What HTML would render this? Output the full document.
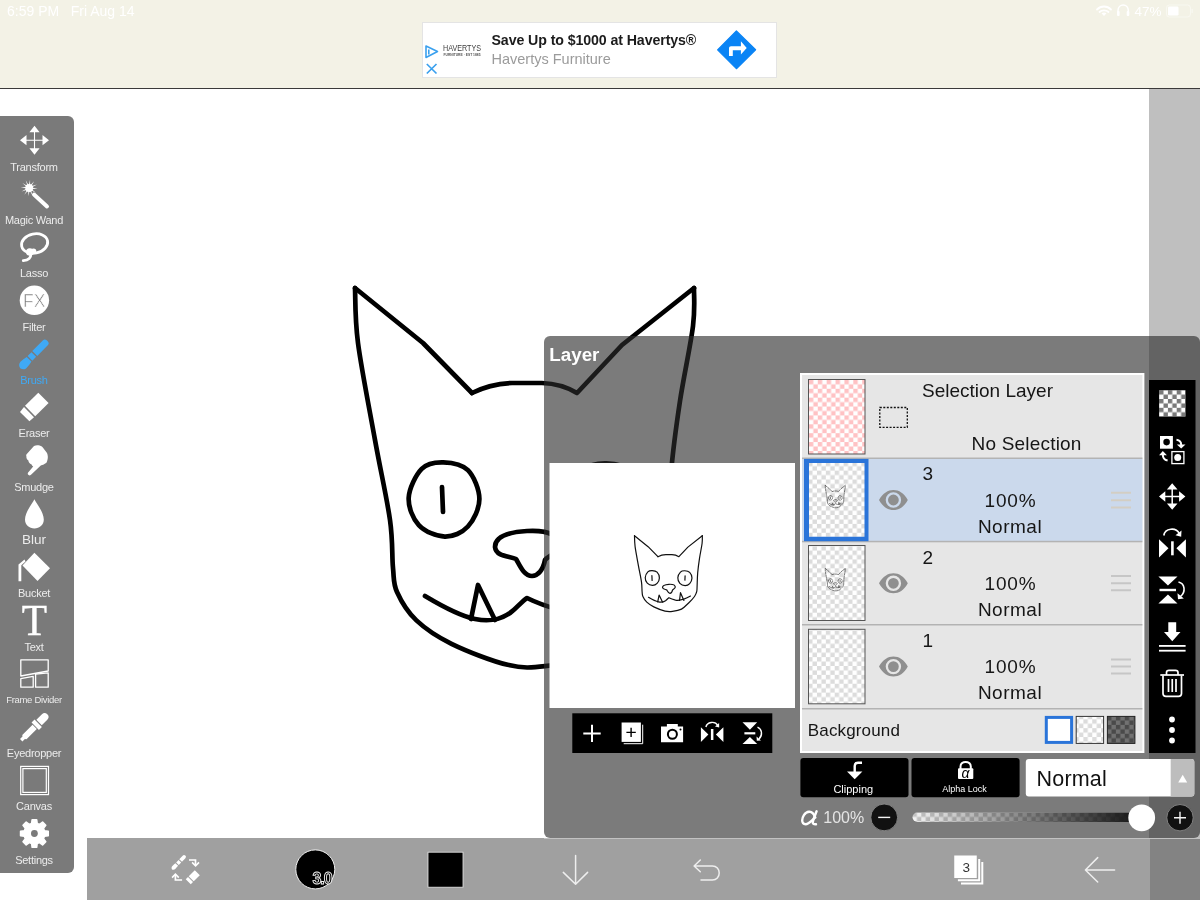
<!DOCTYPE html>
<html><head><meta charset="utf-8">
<style>
*{margin:0;padding:0;box-sizing:border-box}
html,body{width:1200px;height:900px;overflow:hidden;background:#fff;font-family:"Liberation Sans",sans-serif}
body{will-change:transform}
.a{position:absolute}
#top{left:0;top:0;width:1200px;height:88.8px;background:#f3f2e6;border-bottom:1.5px solid #3a3a3a}
.st{color:#fff;font-size:14px;top:3px}
#ad{left:422px;top:22px;width:355px;height:56px;background:#fff;border:1px solid #e4e4e4}
#col{left:1149px;top:89px;width:51px;height:811px;background:#bfbfbf}
#tb{left:0;top:116px;width:74px;height:757px;background:#7a7a7a;border-radius:0 6px 6px 0}
.lbl{position:absolute;left:0;width:68px;text-align:center;font-size:11px;color:#ececec;white-space:nowrap;letter-spacing:-0.25px}
.ic{position:absolute}
#bb{left:87px;top:838px;width:1063px;height:62px;background:#a0a0a0}
#bbc{left:1150px;top:839px;width:50px;height:61px;background:#838383}
#bbl{left:544.4px;top:838px;width:655.6px;height:1.2px;background:#c2c2c2}
#panel{left:544.4px;top:336px;width:655.6px;height:501.6px;background:rgba(44,44,44,0.625);border-radius:6px}
</style></head><body>
<div id="top" class="a"></div>
<div class="a st" style="left:7px">6:59 PM&nbsp;&nbsp;&nbsp;Fri Aug 14</div>
<svg class="a" style="left:1090px;top:0" width="110" height="24">
<g fill="none" stroke="#fff" stroke-width="1.8" stroke-linecap="round">
<path d="M7,9.5 C11,5.5 17,5.5 21,9.5"/>
<path d="M9.5,12 C12,9.8 16,9.8 18.5,12"/>
</g>
<path d="M14,16 L11.5,13.3 C13,12.3 15,12.3 16.5,13.3 Z" fill="#fff"/>
<g fill="none" stroke="#fff" stroke-width="1.5" stroke-linecap="round">
<path d="M28,14 V10.5 C28,7 30.5,5 33.2,5 C36,5 38.3,7 38.3,10.5 V14"/>
</g>
<rect x="27" y="11" width="2.6" height="5" rx="1" fill="#fff"/>
<rect x="36.7" y="11" width="2.6" height="5" rx="1" fill="#fff"/>
<text x="44.5" y="16" font-family="Liberation Sans" font-size="13.5" fill="#fff">47%</text>
<rect x="76.5" y="5" width="24" height="12" rx="3" fill="none" stroke="#fff" stroke-width="1" opacity="0.45"/>
<rect x="78" y="6.5" width="10.5" height="9" rx="1.2" fill="#fff"/>
<rect x="101.5" y="9" width="1.3" height="4" fill="#fff" opacity="0.45"/>
</svg>
<div id="ad" class="a"></div>
<svg class="a" style="left:0;top:0" width="1200" height="88">
<g fill="none" stroke="#3aa0ee" stroke-width="1.6" stroke-linejoin="round">
<path d="M426,46 L437.5,51.5 L426,57.5 Z"/>
<path d="M428.8,49.5 V54.5"/>
<path d="M426.8,64 L436.5,73.5 M436.5,64 L426.8,73.5" stroke-width="1.7"/>
</g>
<text x="443" y="51.3" font-family="Liberation Sans" font-size="8.3" fill="#3d3d3d" textLength="38" lengthAdjust="spacingAndGlyphs">HAVERTYS</text>
<text x="443.5" y="55.5" font-family="Liberation Sans" font-size="3" font-weight="700" fill="#555" textLength="37" lengthAdjust="spacingAndGlyphs">FURNITURE · EST 1885</text>
<path d="M736.4,31 L755.6,49.8 L736.4,68.7 L717.6,49.8 Z" fill="#0a84f5" stroke="#0a84f5" stroke-width="1.2" stroke-linejoin="round"/>
<path d="M729,56 V48.3 C729,47 729.8,46.3 731,46.3 H740.9 V41.3 L746.7,48 L740.9,54.6 V50.2 H732.8 V56 Z" fill="#fff"/>
</svg>
<div class="a" style="left:491.5px;top:31.8px;font-size:14.2px;font-weight:700;color:#1c1c1c;white-space:nowrap;letter-spacing:-0.1px">Save Up to $1000 at Havertys®</div>
<div class="a" style="left:491.5px;top:50.5px;font-size:14.5px;color:#9b9b9b;white-space:nowrap">Havertys Furniture</div>

<div id="col" class="a"></div>
<div id="bb" class="a"></div>
<div id="bbc" class="a"></div><div id="bbl" class="a"></div>
<svg class="a" style="left:0;top:0" width="1200" height="900">
<g fill="#fff">
<!-- swap brush eraser -->
<g fill="#fff">
<g transform="translate(172,869.4) rotate(-46)">
<path d="M0,0 C0.3,-1.5 1.5,-2 3,-2 C4.5,-2 6,-2 6.8,-1.9 L6.8,1.9 C6,2 4.5,2 3,2 C1.5,2 0.3,1.5 0,0 Z"/>
<rect x="7.9" y="-1.8" width="3.4" height="3.6"/>
<path d="M12.4,-1.9 H17.3 A1.9,1.9 0 0 1 17.3,1.9 H12.4 Z"/>
</g>
<path d="M189,860 H195.5 V865" fill="none" stroke="#fff" stroke-width="1.7"/>
<path d="M192.1,862.4 L195.6,865.8 L199,862.4" fill="none" stroke="#fff" stroke-width="1.6"/>
<path d="M182.1,880 H175.4 V874.8" fill="none" stroke="#fff" stroke-width="1.7"/>
<path d="M172.1,877.6 L175.4,874.2 L178.8,877.6" fill="none" stroke="#fff" stroke-width="1.6"/>
<g transform="translate(194.8,870.2) rotate(135)">
<rect x="0" y="-7.07" width="8.6" height="7.07"/>
<rect x="9.6" y="-7.07" width="3.2" height="7.07"/>
</g>
</g>
</svg>
<svg class="a" style="left:0;top:0" width="1200" height="900">
<circle cx="315.3" cy="869.4" r="19.5" fill="#000" stroke="#f0f0f0" stroke-width="1"/>
<text x="322" y="883.7" text-anchor="middle" font-family="Liberation Sans" font-weight="700" font-size="16" fill="#000" stroke="#eee" stroke-width="0.9" letter-spacing="-1">3.0</text>
<rect x="428" y="852.2" width="35" height="35" fill="#000" stroke="#e8e8e8" stroke-width="0.8"/>
<g fill="none" stroke="#eeeeee" stroke-width="1.5" stroke-linecap="round" stroke-linejoin="round">
<path d="M575.6,855.6 V884 M563.3,872.4 L575.6,884.2 L587.6,872.4"/>
<path d="M700.3,860 L694.1,866 L700.3,871.8 M694.5,866 H712.5 C716.5,866 719.2,869 719.2,873 C719.2,877 716.5,880 712.5,880 H701"/>
<path d="M1085.4,870 H1114.6 M1097.7,857.6 L1085.4,870 L1097.7,882"/>
</g>
<g fill="#fff">
<path d="M978.2,859 H980.2 V881.3 H957.9 V879.3 H978.2 Z"/>
<path d="M981.3,862 H983.3 V884.5 H961 V882.5 H981.3 Z"/>
<rect x="954.25" y="855.5" width="22.5" height="22.5"/>
</g>
<text x="966.2" y="871.8" text-anchor="middle" font-family="Liberation Sans" font-size="13.5" fill="#333">3</text>
</svg>

<!-- big cat -->
<svg class="a" style="left:0;top:0" width="1200" height="900">
<defs>
<g id="cat" fill="none" stroke-linecap="round" stroke-linejoin="round">
<path d="M472,393 L423,343 L355,288"/>
<path d="M355.0,288.0 C355.5,297.2 354.7,317.7 358.0,343.0 C361.3,368.3 369.7,410.5 375.0,440.0 C380.3,469.5 387.0,498.7 390.0,520.0 C393.0,541.3 391.8,556.0 393.0,568.0 C394.2,580.0 393.1,583.3 397.0,592.0 C400.9,600.7 407.3,611.8 416.4,620.4 C425.5,629.0 436.3,636.4 451.5,643.8 C466.7,651.2 492.0,661.1 507.6,664.8 C523.2,668.5 531.3,667.8 545.0,666.2 C558.7,664.6 576.3,662.2 590.0,655.0 C603.7,647.8 616.2,633.5 627.0,623.0 C637.8,612.5 648.5,601.2 655.0,592.0 C661.5,582.8 663.8,576.7 666.0,568.0 C668.2,559.3 667.2,555.8 668.0,540.0 C668.8,524.2 669.0,496.2 671.0,473.0 C673.0,449.8 676.3,425.5 680.0,401.0 C683.7,376.5 690.7,344.8 693.0,326.0 C695.3,307.2 693.8,294.3 694.0,288.0"/>
<path d="M694,288 L622,345 L577,393 C567,387 557,383.5 542,383 L512,383 C497,383.5 484,387 472,393"/>
<path d="M443.3,462.3 C451.0,462.5 461.9,464.1 467.9,470.2 C473.9,476.3 479.4,489.7 479.4,499.1 C479.4,508.5 473.7,520.2 467.9,526.5 C462.1,532.8 453.0,536.8 444.8,536.6 C436.6,536.4 424.8,531.6 418.8,525.1 C412.8,518.6 408.2,507.1 408.7,497.7 C409.2,488.3 415.9,474.7 421.7,468.8 C427.5,462.9 435.6,462.1 443.3,462.3 Z"/>
<path d="M606.3,463.3 C614.0,463.5 624.9,465.1 630.9,471.2 C636.9,477.3 642.4,490.7 642.4,500.1 C642.4,509.5 636.7,521.2 630.9,527.5 C625.1,533.8 616.0,537.8 607.8,537.6 C599.6,537.4 587.8,532.6 581.8,526.1 C575.8,519.6 571.2,508.1 571.7,498.7 C572.2,489.3 578.9,475.7 584.7,469.8 C590.5,463.9 598.6,463.1 606.3,463.3 Z"/>
<path d="M442,487 L443,512 M608,489 L607,510"/>
<path d="M527,531 C545,530 558,533 559,545 C559,553 548,556 545,560 C543,570 538,576 532,576 C524,576 520,566 516,559 C510,556 496,557 495,547 C495,536 510,532 527,531 Z"/>
<path d="M425,596 C445,608 460,616 475,619 C490,622 500,620 510,613 C518,607 522,601 527,598 C535,602 545,606 560,610 C585,614 615,602 635,590"/>
<path d="M471,619 L478,585 L495,620 M580,612 L585,573 L602,612"/>
</g>
</defs>
<use href="#cat" stroke="#000" stroke-width="4.7"/>
</svg>


<div id="tb" class="a"></div>
<svg class="a" style="left:0;top:0" width="80" height="900">
<g fill="#fff" stroke="none">
<!-- transform -->
<path d="M34.5,125.8 L39.6,132.3 L29.4,132.3 Z M34.5,154.7 L39.6,148.2 L29.4,148.2 Z M20,140.2 L26.5,135.1 L26.5,145.3 Z M49,140.2 L42.5,135.1 L42.5,145.3 Z"/>
<path d="M34.5,131 V149.5 M25.5,140.2 H43.5" stroke="#fff" stroke-width="1.1"/>
<!-- magic wand -->
<g transform="translate(29.2,188)"><path d="M0.84,-8.36 L0.92,-2.43 L4.91,-6.82 L2.01,-1.65 L7.66,-3.45 L2.57,-0.42 L8.36,0.84 L2.43,0.92 L6.82,4.91 L1.65,2.01 L3.45,7.66 L0.42,2.57 L-0.84,8.36 L-0.92,2.43 L-4.91,6.82 L-2.01,1.65 L-7.66,3.45 L-2.57,0.42 L-8.36,-0.84 L-2.43,-0.92 L-6.82,-4.91 L-1.65,-2.01 L-3.45,-7.66 L-0.42,-2.57 Z"/><circle r="3.9"/></g>
<path d="M34,194.5 L47,206.5" stroke="#fff" stroke-width="4" stroke-linecap="round"/>
<!-- lasso -->
<g fill="none" stroke="#fff" stroke-width="2.8" stroke-linecap="round">
<ellipse cx="34.6" cy="243.5" rx="13.2" ry="9.6" transform="rotate(-12 34.6 243.5)"/>
<path d="M30.5,252.5 C32,258 28,260.3 23.3,260.6"/>
</g>
<circle cx="29.8" cy="252" r="3.8"/>
<circle cx="33.5" cy="251.3" r="2.8"/>
<!-- filter -->
<circle cx="34.4" cy="300.3" r="14.7"/>
</g>
<text x="34.2" y="306.5" text-anchor="middle" font-family="Liberation Sans" font-size="17.5" fill="#7a7a7a" stroke="#fff" stroke-width="0.55">FX</text>
<!-- brush -->
<g fill="#3fa9f5" transform="translate(20.2,368.2) rotate(-45.3)">
<path d="M0,0 C0.5,-2.5 2,-4.2 5,-4.3 C8,-4.3 10.5,-3.8 12.6,-3.3 V3.3 C10.5,3.8 8,4.3 5,4.3 C2.5,4.3 0.8,3 0,0 Z"/>
<rect x="13.9" y="-3.3" width="5.4" height="6.6"/>
<path d="M20.7,-3.5 H36 A2.5,3.5 0 0 1 36,3.5 H20.7 Z"/>
</g>
<!-- eraser -->
<g fill="#fff">
<path d="M38.3,392.7 L48.6,403 L35.2,416.2 L25,405.8 Z"/>
<path d="M24,407 L34,417.2 L29.4,421.3 L20,411.9 Z"/>
</g>
<!-- smudge -->
<path fill="#fff" d="M34,446 C36,445 38,445.2 39.6,445.6 C41.5,446.2 42.5,447 43.2,448 L47,453 C48,455 48,458 47.6,459.2 C47,462 46.5,463 45.6,463.2 C44,464.5 42.5,465 40.8,465.4 L31,474.8 C30,475.7 28.5,475.5 28,474.6 C27.5,473.6 27.8,472.6 28.6,472 L33.2,466.6 C32.5,466 31.8,465.3 31.6,464.4 C29.5,463.5 28.5,462 28.4,460.4 C27,459.5 26.2,458 26.4,456.4 C26,455.5 26.2,454.5 26.8,454 Z"/>
<!-- blur -->
<path d="M34.4,499.2 C36,503 43.8,512 43.8,519.5 C43.8,524.8 39.5,528.4 34.4,528.4 C29.3,528.4 25,524.8 25,519.5 C25,512 32.8,503 34.4,499.2 Z" fill="#fff"/>
<!-- bucket -->
<g fill="#fff">
<path d="M34.4,552.7 L50,568.3 L37.5,581 L22.5,565.5 Z"/>
<path d="M18.5,564.5 L24.5,559.5 L25.5,561.5 L21.3,565.2 L21.3,581.3 L18.5,581.3 Z"/>
</g>
<!-- text -->
<text transform="translate(34.3,634.8) scale(0.94,1)" text-anchor="middle" font-family="Liberation Serif" font-size="44" fill="#fff" stroke="#fff" stroke-width="0.4">T</text>
<!-- frame divider -->
<g fill="none" stroke="#fff" stroke-width="1.3" stroke-linejoin="round">
<path d="M20.8,659.8 H48.2 V671 L20.8,676 Z"/>
<path d="M20.8,678.6 L33.2,676.4 V687.2 H20.8 Z"/>
<path d="M35.6,674.2 L48.2,672.8 V687.2 H35.6 Z"/>
</g>
<!-- eyedropper -->
<g fill="#fff" transform="translate(21.2,740.2) rotate(-44.8)">
<path d="M0,-1.7 H3.5 L4.5,-3 H19 V3 H4.5 L3.5,1.7 H0 Z"/>
<rect x="19.8" y="-5.2" width="4.2" height="10.4"/>
<path d="M25.2,-3.8 H33 A3.8,3.8 0 0 1 33,3.8 H25.2 Z"/>
</g>
<!-- canvas -->
<g fill="none" stroke="#fff">
<rect x="20.7" y="766.4" width="27.8" height="28.2" stroke-width="1.2"/>
<rect x="22.9" y="768.6" width="23.4" height="23.8" stroke-width="1.2"/>
</g>
<!-- settings -->
<g transform="translate(34.4,833.5)"><path fill="#fff" stroke="#fff" stroke-width="1.6" stroke-linejoin="round" d="M-2.77,-10.02 L-2.23,-13.82 L2.23,-13.82 L2.77,-10.02 L5.13,-9.05 L8.20,-11.35 L11.35,-8.20 L9.05,-5.13 L10.02,-2.77 L13.82,-2.23 L13.82,2.23 L10.02,2.77 L9.05,5.13 L11.35,8.20 L8.20,11.35 L5.13,9.05 L2.77,10.02 L2.23,13.82 L-2.23,13.82 L-2.77,10.02 L-5.13,9.05 L-8.20,11.35 L-11.35,8.20 L-9.05,5.13 L-10.02,2.77 L-13.82,2.23 L-13.82,-2.23 L-10.02,-2.77 L-9.05,-5.13 L-11.35,-8.20 L-8.20,-11.35 L-5.13,-9.05 Z"/><circle r="3.4" fill="#7a7a7a"/></g>
</svg>
<div class="lbl a" style="top:161px;left:0">Transform</div>
<div class="lbl a" style="top:214px;left:0">Magic Wand</div>
<div class="lbl a" style="top:267px">Lasso</div>
<div class="lbl a" style="top:321px">Filter</div>
<div class="lbl a" style="top:374px;color:#3fa9f5">Brush</div>
<div class="lbl a" style="top:427px">Eraser</div>
<div class="lbl a" style="top:481px">Smudge</div>
<div class="lbl a" style="top:532px;font-size:13.5px;letter-spacing:0">Blur</div>
<div class="lbl a" style="top:587px">Bucket</div>
<div class="lbl a" style="top:641px">Text</div>
<div class="lbl a" style="top:694px;font-size:9.5px;letter-spacing:-0.3px">Frame Divider</div>
<div class="lbl a" style="top:747px">Eyedropper</div>
<div class="lbl a" style="top:800.3px">Canvas</div>
<div class="lbl a" style="top:854px">Settings</div>


<div id="panel" class="a"></div>
<svg class="a" style="left:0;top:0" width="1200" height="900">
<defs>
<pattern id="ckPink" x="808.9" y="379.9" width="8.88" height="8.88" patternUnits="userSpaceOnUse">
<rect width="8.88" height="8.88" fill="#fff"/><rect width="4.44" height="4.44" fill="#ffc2c4"/><rect x="4.44" y="4.44" width="4.44" height="4.44" fill="#ffc2c4"/>
</pattern>
<pattern id="ckGray" x="0" y="0" width="8.88" height="8.88" patternUnits="userSpaceOnUse">
<rect width="8.88" height="8.88" fill="#fff"/><rect width="4.44" height="4.44" fill="#dcdcdc"/><rect x="4.44" y="4.44" width="4.44" height="4.44" fill="#dcdcdc"/>
</pattern>
<pattern id="ckDark" x="1107" y="716" width="8.88" height="8.88" patternUnits="userSpaceOnUse">
<rect width="8.88" height="8.88" fill="#717171"/><rect width="4.44" height="4.44" fill="#4a4a4a"/><rect x="4.44" y="4.44" width="4.44" height="4.44" fill="#4a4a4a"/>
</pattern>
<pattern id="ckTool" x="1159.1" y="390.2" width="8.8" height="8.8" patternUnits="userSpaceOnUse">
<rect width="8.8" height="8.8" fill="#fff"/><rect width="4.4" height="4.4" fill="#7a7a7a"/><rect x="4.4" y="4.4" width="4.4" height="4.4" fill="#7a7a7a"/>
</pattern>
<pattern id="ckSl" x="912.5" y="812.5" width="8.8" height="8.8" patternUnits="userSpaceOnUse">
<rect width="8.8" height="8.8" fill="#f4f4f4"/><rect width="4.4" height="4.4" fill="#c4c4c4"/><rect x="4.4" y="4.4" width="4.4" height="4.4" fill="#c4c4c4"/>
</pattern>
<linearGradient id="sl" x1="0" x2="1" y1="0" y2="0">
<stop offset="0" stop-color="#111" stop-opacity="0"/>
<stop offset="1" stop-color="#111" stop-opacity="1"/>
</linearGradient>
</defs>
<text x="549.3" y="361" font-family="Liberation Sans" font-weight="700" font-size="18.8" fill="#fff">Layer</text>
<!-- preview -->
<rect x="549.5" y="463" width="245.5" height="245" fill="#fff"/>
<use href="#cat" stroke="#111" stroke-width="6" transform="translate(563.5,478.1) scale(0.2)"/>
<!-- preview toolbar -->
<rect x="572.3" y="713.3" width="200" height="39.7" fill="#000"/>
<g fill="#fff">
<path d="M583.3,733.4 H600.7 M592,724.7 V742.1" stroke="#fff" stroke-width="2"/>
<path d="M642.7,724.7 V743.7 H623.7" fill="none" stroke="#fff" stroke-width="1"/>
<rect x="621.6" y="722.5" width="19.3" height="19.4"/>
<path d="M626.4,732.4 H635.8 M631.1,727.7 V737.1" stroke="#000" stroke-width="1.4"/>
<path d="M661,726.6 H666.9 V724 H677.8 V726.6 H683.1 V742.2 H661 Z"/>
<circle cx="672.4" cy="734.25" r="4.5" fill="none" stroke="#000" stroke-width="2"/>
<circle cx="680.5" cy="729.5" r="1" fill="#000"/>
<path d="M700.9,727.2 L708.4,734.4 L700.9,741.9 Z M723.4,727.2 L715.9,734.4 L723.4,741.9 Z"/>
<rect x="710.9" y="729" width="2.5" height="11"/>
<path d="M705.9,727 C707,722 715,720.5 717.8,725.5" fill="none" stroke="#fff" stroke-width="1.4"/>
<path d="M719.1,723 L719.2,727.5 L715,726.5 Z"/>
<path d="M742.5,722.2 H757.2 L749.9,729.7 Z M742.5,744.1 H757.2 L749.9,736.9 Z"/>
<rect x="744.4" y="732.2" width="10.9" height="2.2"/>
<path d="M757.5,727.2 C762,729 763,735 759,739" fill="none" stroke="#fff" stroke-width="1.4"/>
<path d="M756.5,736.5 L756.8,740.8 L761,740.5 Z"/>
</g>
<!-- layer list -->
<rect x="801" y="374" width="342.4" height="378" fill="#e6e6e6" stroke="#fff" stroke-width="2"/>
<rect x="802" y="458.5" width="340.4" height="82.8" fill="#cbd9ec"/>
<g fill="#b3b3b3">
<rect x="802" y="457.5" width="340.4" height="1.5"/>
<rect x="802" y="540.8" width="340.4" height="1.5"/>
<rect x="802" y="624" width="340.4" height="1.5"/>
<rect x="802" y="708" width="340.4" height="1.5"/>
</g>
<!-- thumbs -->
<rect x="808.5" y="379.5" width="56.5" height="74.5" fill="url(#ckPink)" stroke="#555" stroke-width="1"/>
<rect x="806.5" y="461.4" width="59.5" height="77.3" fill="none" stroke="#2a74d9" stroke-width="5"/>
<rect x="809" y="463" width="55.5" height="73.7" fill="url(#ckGray)"/>
<rect x="808.5" y="545.5" width="56.5" height="75" fill="url(#ckGray)" stroke="#555" stroke-width="1"/>
<rect x="808.5" y="629.3" width="56.5" height="74.5" fill="url(#ckGray)" stroke="#555" stroke-width="1"/>
<use href="#cat" stroke="#3a3a3a" stroke-width="13" stroke-dasharray="40,18" opacity="0.85" transform="translate(804.3,468.4) scale(0.059)"/>
<use href="#cat" stroke="#3a3a3a" stroke-width="13" stroke-dasharray="40,18" opacity="0.85" transform="translate(804.3,551.5) scale(0.059)"/>
<rect x="879.8" y="407.5" width="27.5" height="19.8" fill="none" stroke="#111" stroke-width="1.3" stroke-dasharray="2,1.5"/>
<g font-family="Liberation Sans" font-size="19" fill="#161616">
<text x="922" y="397.2">Selection Layer</text>
<text x="971.5" y="449.7" letter-spacing="0.2">No Selection</text>
<text x="922.5" y="480">3</text>
<text x="1010.5" y="506.8" text-anchor="middle" letter-spacing="0.8">100%</text>
<text x="1010" y="532.5" text-anchor="middle" letter-spacing="0.5">Normal</text>
<text x="922.5" y="563.8">2</text>
<text x="1010.5" y="590.1" text-anchor="middle" letter-spacing="0.8">100%</text>
<text x="1010" y="615.8" text-anchor="middle" letter-spacing="0.5">Normal</text>
<text x="922.5" y="647">1</text>
<text x="1010.5" y="673.4" text-anchor="middle" letter-spacing="0.8">100%</text>
<text x="1010" y="699" text-anchor="middle" letter-spacing="0.5">Normal</text>
<text x="807.8" y="736" font-size="17" letter-spacing="0.15">Background</text>
</g>
<g id="eyes" fill="#8f8f8f" fill-rule="evenodd">
<path d="M879,500 C883,493 888,490 893.4,490 C899,490 904,493 907.8,500 C904,507 899,510 893.4,510 C888,510 883,507 879,500 Z M901.1,500 A7.7,7.7 0 1,0 885.7,500 A7.7,7.7 0 1,0 901.1,500 Z M898.8,500 A5.4,5.4 0 1,0 888,500 A5.4,5.4 0 1,0 898.8,500 Z"/>
</g>
<use href="#eyes" y="83.3"/>
<use href="#eyes" y="166.6"/>
<g stroke-width="2">
<path d="M1111,492.8 H1131 M1111,500.2 H1131 M1111,507.5 H1131" stroke="#d3cec3"/>
<path d="M1111,576.1 H1131 M1111,583.3 H1131 M1111,590.3 H1131" stroke="#c6c6c6"/>
<path d="M1111,659.4 H1131 M1111,666.6 H1131 M1111,673.6 H1131" stroke="#c6c6c6"/>
</g>
<rect x="1046.3" y="717.4" width="25.3" height="25" fill="#fff" stroke="#2a74d9" stroke-width="3"/>
<rect x="1076.2" y="716.4" width="27.4" height="27" fill="url(#ckGray)" stroke="#333" stroke-width="1"/>
<rect x="1107.4" y="716.4" width="27.5" height="27" fill="url(#ckDark)" stroke="#222" stroke-width="1"/>
<!-- right toolbar -->
<rect x="1149" y="380" width="46.5" height="373" fill="#000"/>
<rect x="1159.1" y="390.2" width="26.4" height="26.4" fill="url(#ckTool)"/>
<g fill="#fff">
<rect x="1160" y="436" width="12.9" height="12.7"/>
<circle cx="1166.6" cy="442.1" r="3.3" fill="#000"/>
<rect x="1171.9" y="451.6" width="12" height="12" fill="none" stroke="#fff" stroke-width="1.3"/>
<circle cx="1177.7" cy="457.6" r="3.5"/>
<path d="M1176.5,439.7 C1179,440 1181.2,442 1181.2,445" fill="none" stroke="#fff" stroke-width="2"/>
<path d="M1176.8,444.4 H1185.5 L1181.2,448.5 Z"/>
<path d="M1167.6,460.5 C1165,460 1162.8,458 1162.8,454.5" fill="none" stroke="#fff" stroke-width="2"/>
<path d="M1159.1,455.3 H1166.9 L1162.8,451 Z"/>
<!-- move -->
<path d="M1172.2,483.2 L1177.5,489.5 L1166.9,489.5 Z M1172.2,509.7 L1177.5,503.4 L1166.9,503.4 Z M1159,496.5 L1165.3,491.2 L1165.3,501.8 Z M1185.4,496.5 L1179.1,491.2 L1179.1,501.8 Z"/>
<path d="M1172.2,488 V505 M1164,496.5 H1180.5" stroke="#fff" stroke-width="1.5"/>
<!-- flip h -->
<path d="M1159,539.2 L1168.5,548.3 L1159,557.4 Z M1185.9,539.2 L1176.4,548.3 L1185.9,557.4 Z"/>
<rect x="1171.1" y="541.3" width="2.6" height="14"/>
<path d="M1163.8,535.5 C1165,528 1176,527 1179.3,533.5" fill="none" stroke="#fff" stroke-width="1.6"/>
<path d="M1181.5,530.5 L1181.2,536.8 L1175.5,535.2 Z"/>
<!-- flip v -->
<path d="M1158.4,576.5 H1177.5 L1167.95,585.5 Z M1158.4,603.4 H1177.5 L1167.95,594.5 Z"/>
<rect x="1159.5" y="588.8" width="16.5" height="2.4"/>
<path d="M1178.5,582 C1185,583.5 1186,592 1180.5,596.5" fill="none" stroke="#fff" stroke-width="1.6"/>
<path d="M1177.5,593.2 L1178,599.2 L1183.8,598.5 Z"/>
<!-- merge down -->
<path d="M1168.3,622.2 H1176.2 V632 H1180.5 L1172.25,641.2 L1164,632 H1168.3 Z"/>
<rect x="1159" y="645" width="26.6" height="1.8"/>
<rect x="1159" y="649.8" width="26.6" height="1.8"/>
<!-- trash -->
<g fill="none" stroke="#fff" stroke-width="1.7">
<path d="M1163,675.5 V693.5 C1163,695.3 1164.2,696.3 1166,696.3 H1178.5 C1180.3,696.3 1181.5,695.3 1181.5,693.5 V675.5"/>
<path d="M1160.3,675 H1184"/>
<path d="M1166.5,675 V672.5 C1166.5,671 1167.5,670.3 1169,670.3 H1175.5 C1177,670.3 1178,671 1178,672.5 V675"/>
<path d="M1168.5,679 V692 M1172.25,679 V692 M1176,679 V692"/>
</g>
<circle cx="1172" cy="719.5" r="2.9"/>
<circle cx="1172" cy="730" r="2.9"/>
<circle cx="1172" cy="740.5" r="2.9"/>
</g>
<!-- clipping / alpha lock -->
<rect x="800.4" y="758" width="108.1" height="39.3" rx="3" fill="#000"/>
<rect x="911.5" y="758" width="108.1" height="39.3" rx="3" fill="#000"/>
<path d="M862,762.8 H858 C856,762.8 854.7,764 854.7,766 V772.5" fill="none" stroke="#fff" stroke-width="2.4"/>
<path d="M847,771.5 H862.4 L854.7,779.3 Z" fill="#fff"/>
<text x="853.3" y="792.5" text-anchor="middle" font-family="Liberation Sans" font-size="11" fill="#fff">Clipping</text>
<path d="M960.5,769 V766.5 C960.5,763.5 963,762 965.65,762 C968.3,762 970.8,763.5 970.8,766.5 V769" fill="none" stroke="#fff" stroke-width="2"/>
<rect x="958" y="768.3" width="15.3" height="10.8" rx="1" fill="#fff"/>
<text x="965.6" y="778" text-anchor="middle" font-family="Liberation Sans" font-style="italic" font-size="14" fill="#000">α</text>
<text x="964.6" y="792" text-anchor="middle" font-family="Liberation Sans" font-size="9" fill="#fff">Alpha Lock</text>
<!-- normal dropdown -->
<rect x="1025.8" y="759" width="168.5" height="37.6" rx="3" fill="#fff"/>
<path d="M1170.7,759 H1191.3 A3,3 0 0 1 1194.3,762 V793.6 A3,3 0 0 1 1191.3,796.6 H1170.7 Z" fill="#bdbdbd"/>
<path d="M1182.7,774.7 L1187.2,782.4 H1178.2 Z" fill="#fff"/>
<text x="1036.5" y="785.5" font-family="Liberation Sans" font-size="21.5" fill="#111" letter-spacing="0.2">Normal</text>
<!-- opacity -->
<g fill="none" stroke="#fff" stroke-width="2.4" stroke-linecap="round">
<path d="M815.2,817.5 C813.5,812.5 811,811.6 809,811.8 C804.5,812.2 802.2,817.5 802.2,820.3 C802.2,823 803.6,824.2 805.6,824.2 C809,824.2 812.5,819.5 815.2,817.5 Z" transform="rotate(0)"/>
<path d="M816.6,811.3 C815,815.5 813.2,819.5 812.8,822 C812.5,823.8 813.5,824.3 816,824.2"/>
</g>
<text x="823.3" y="823" font-family="Liberation Sans" font-size="16" fill="#e4e4e4">100%</text>
<circle cx="884.2" cy="817.4" r="13.4" fill="#111" stroke="#8a8a8a" stroke-width="0.9"/>
<rect x="878.2" y="816.7" width="12" height="1.4" fill="#f4f4f4"/>
<rect x="912.5" y="812.5" width="230" height="9.5" rx="4.75" fill="url(#ckSl)"/><rect x="912.5" y="812.5" width="230" height="9.5" rx="4.75" fill="url(#sl)"/>
<circle cx="1141.7" cy="817.8" r="13.4" fill="#fff"/>
<circle cx="1180" cy="817.7" r="13.2" fill="#111" stroke="#8a8a8a" stroke-width="0.9"/>
<path d="M1174,817.7 H1186 M1180,811.7 V823.7" stroke="#f4f4f4" stroke-width="1.4"/>
</svg>

</body></html>
